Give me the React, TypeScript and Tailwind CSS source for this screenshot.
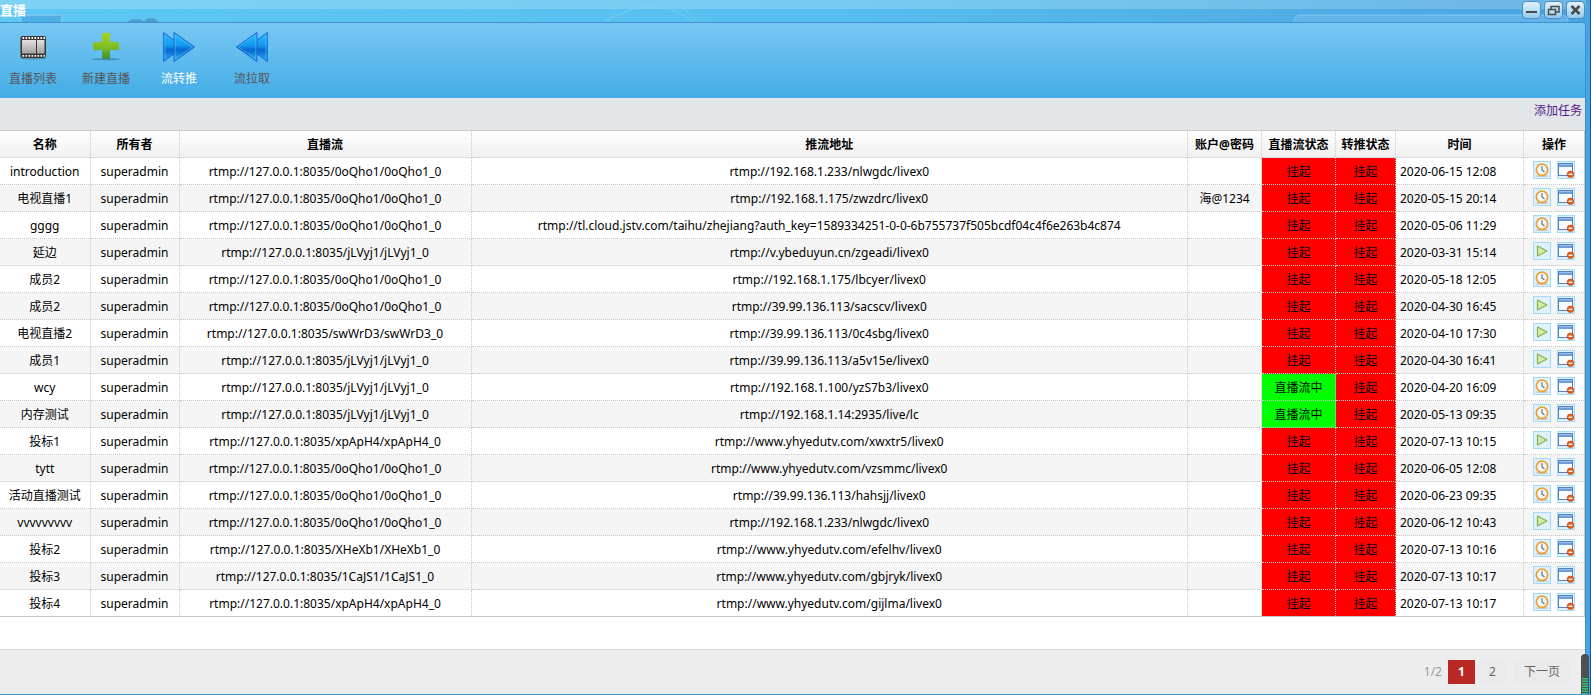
import type { ReactNode } from "react";
import clsx from "clsx";

type Task = {
  name: string;
  stream: string;
  target: string;
  account?: string;
  live?: boolean;
  time: string;
  action: "clock" | "play";
};

const TASKS: Task[] = [
  { name: "introduction", stream: "0oQho1", target: "192.168.1.233/nlwgdc/livex0", time: "2020-06-15 12:08", action: "clock" },
  { name: "电视直播1", stream: "0oQho1", target: "192.168.1.175/zwzdrc/livex0", account: "海@1234", time: "2020-05-15 20:14", action: "clock" },
  { name: "gggg", stream: "0oQho1", target: "tl.cloud.jstv.com/taihu/zhejiang?auth_key=1589334251-0-0-6b755737f505bcdf04c4f6e263b4c874", time: "2020-05-06 11:29", action: "clock" },
  { name: "延边", stream: "jLVyj1", target: "v.ybeduyun.cn/zgeadi/livex0", time: "2020-03-31 15:14", action: "play" },
  { name: "成员2", stream: "0oQho1", target: "192.168.1.175/lbcyer/livex0", time: "2020-05-18 12:05", action: "clock" },
  { name: "成员2", stream: "0oQho1", target: "39.99.136.113/sacscv/livex0", time: "2020-04-30 16:45", action: "play" },
  { name: "电视直播2", stream: "swWrD3", target: "39.99.136.113/0c4sbg/livex0", time: "2020-04-10 17:30", action: "play" },
  { name: "成员1", stream: "jLVyj1", target: "39.99.136.113/a5v15e/livex0", time: "2020-04-30 16:41", action: "play" },
  { name: "wcy", stream: "jLVyj1", target: "192.168.1.100/yzS7b3/livex0", live: true, time: "2020-04-20 16:09", action: "clock" },
  { name: "内存测试", stream: "jLVyj1", target: "192.168.1.14:2935/live/lc", live: true, time: "2020-05-13 09:35", action: "clock" },
  { name: "投标1", stream: "xpApH4", target: "www.yhyedutv.com/xwxtr5/livex0", time: "2020-07-13 10:15", action: "play" },
  { name: "tytt", stream: "0oQho1", target: "www.yhyedutv.com/vzsmmc/livex0", time: "2020-06-05 12:08", action: "clock" },
  { name: "活动直播测试", stream: "0oQho1", target: "39.99.136.113/hahsjj/livex0", time: "2020-06-23 09:35", action: "clock" },
  { name: "vvvvvvvvv", stream: "0oQho1", target: "192.168.1.233/nlwgdc/livex0", time: "2020-06-12 10:43", action: "play" },
  { name: "投标2", stream: "XHeXb1", target: "www.yhyedutv.com/efelhv/livex0", time: "2020-07-13 10:16", action: "clock" },
  { name: "投标3", stream: "1CaJS1", target: "www.yhyedutv.com/gbjryk/livex0", time: "2020-07-13 10:17", action: "clock" },
  { name: "投标4", stream: "xpApH4", target: "www.yhyedutv.com/gijlma/livex0", time: "2020-07-13 10:17", action: "clock" },
];

const COLUMNS = [
  { label: "名称", width: "w-[90px]" },
  { label: "所有者", width: "w-[89px]" },
  { label: "直播流", width: "w-[292px]" },
  { label: "推流地址", width: "" },
  { label: "账户@密码", width: "w-[74px]" },
  { label: "直播流状态", width: "w-[74px]" },
  { label: "转推状态", width: "w-[60px]" },
  { label: "时间", width: "w-[128px]" },
  { label: "操作", width: "w-[61px]" },
];

function FilmIcon() {
  return (
    <svg width="32" height="32" viewBox="0 0 32 32" aria-hidden="true">
      <defs>
        <linearGradient id="film" x1="0" y1="0" x2="0" y2="1">
          <stop offset="0" stopColor="#e2e2e2" />
          <stop offset="1" stopColor="#a2a2a2" />
        </linearGradient>
      </defs>
      <ellipse cx="16" cy="27.500" rx="13" ry="1" fill="#3d6c8a" opacity=".5" />
      <rect x="3.500" y="5" width="25.500" height="22" rx="2" fill="#3b3634" />
      <rect x="5" y="9" width="14" height="13.500" fill="url(#film)" />
      <rect x="20" y="9" width="7.500" height="13.500" fill="url(#film)" />
      <path d="M5.500 7h22.500M5.500 24.800h22.500" stroke="#fff" strokeWidth="1.800" strokeDasharray="1.600 1.400" />
    </svg>
  );
}

function PlusIcon() {
  return (
    <svg width="32" height="32" viewBox="0 0 32 32" aria-hidden="true">
      <defs>
        <linearGradient id="plus" x1="0" y1="0" x2="0" y2="1">
          <stop offset="0" stopColor="#a9d51c" />
          <stop offset=".55" stopColor="#7dbd25" />
          <stop offset="1" stopColor="#3f8f34" />
        </linearGradient>
      </defs>
      <ellipse cx="16" cy="28.200" rx="14" ry="1" fill="#2b6f9c" opacity=".6" />
      <path d="M13.500 2h5q1.500 0 1.500 1.500V11h7.500q1.500 0 1.500 1.500v5q0 1.500-1.500 1.500H20v7.500q0 1.500-1.500 1.500h-5q-1.500 0-1.500-1.500V19H4.500Q3 19 3 17.500v-5Q3 11 4.500 11H12V3.500Q12 2 13.500 2z" fill="url(#plus)" />
    </svg>
  );
}

function ArrowsIcon({ reverse }: { reverse?: boolean }) {
  return (
    <svg width="32" height="32" viewBox="0 0 32 32" aria-hidden="true">
      <defs>
        <linearGradient id="arrows" x1="0" y1="0" x2="0" y2="1">
          <stop offset="0" stopColor="#2cc0ff" />
          <stop offset=".45" stopColor="#1698ee" />
          <stop offset=".6" stopColor="#0767d0" />
          <stop offset="1" stopColor="#2fb4f8" />
        </linearGradient>
      </defs>
      <g transform={reverse ? "matrix(-1 0 0 1 32 0)" : undefined} fill="url(#arrows)" stroke="#1763d8" strokeLinejoin="round">
        <path d="M.7 1.500v29L20 16z" />
        <path d="M11 1.500v29L31.500 16z" />
        <path d="M2 4.500v23M12.200 4v24L29.500 16z" fill="none" stroke="#5fd0ff" strokeWidth=".7" opacity=".7" />
      </g>
    </svg>
  );
}

function ClockIcon() {
  return (
    <svg width="16" height="16" viewBox="0 0 16 16" aria-hidden="true">
      <ellipse cx="8" cy="14" rx="6.500" ry="1" fill="#9aa9b3" opacity=".5" />
      <circle cx="8" cy="7.800" r="5.700" fill="#f4f7fb" stroke="#eda233" strokeWidth="1.800" />
      <path d="M8 4.200V8l2.500 2" fill="none" stroke="#707b86" strokeWidth="1.300" />
    </svg>
  );
}

function PlayIcon() {
  return (
    <svg width="16" height="16" viewBox="0 0 16 16" aria-hidden="true">
      <path d="M3.500 3v10L13 8z" fill="#d4eba8" stroke="#86b054" strokeWidth="1.200" strokeLinejoin="round" />
    </svg>
  );
}

function RemoveIcon() {
  return (
    <svg width="16" height="16" viewBox="0 0 16 16" aria-hidden="true">
      <rect x=".5" y="1.500" width="14" height="12" fill="#f8fbff" stroke="#5781bd" />
      <path d="M1 2h13v3H1z" fill="#6f9bdb" />
      <path d="M1 2.500h13" stroke="#9dc0ef" />
      <circle cx="12.500" cy="12.300" r="3.300" fill="#e0601c" stroke="#bd4208" strokeWidth=".6" />
      <path d="M10.600 12.300h3.800" stroke="#fff" strokeWidth="1.300" />
    </svg>
  );
}

function ToolButton({ label, active, children }: { label: string; active?: boolean; children: ReactNode }) {
  return (
    <button
      type="button"
      className={clsx("flex w-[66px] flex-col items-center gap-2 pt-2", active ? "text-white" : "text-[#555]")}
    >
      {children}
      <span className="leading-4">{label}</span>
    </button>
  );
}

function WindowButton({ label, children }: { label: string; children: ReactNode }) {
  return (
    <button
      type="button"
      aria-label={label}
      className="flex h-[18px] w-[19px] items-center justify-center rounded-sm border border-[#4a8fbd] bg-linear-to-b from-[#e4f2fb] to-[#8fcbee]"
    >
      <svg width="13" height="14" viewBox="0 0 13 14" fill="none" stroke="#4a4a4a" strokeWidth="2" aria-hidden="true">
        {children}
      </svg>
    </button>
  );
}

function StatusCell({ live }: { live?: boolean }) {
  return <td className={live ? "bg-[#00ff00]" : "bg-[#ff0000]"}>{live ? "直播流中" : "挂起"}</td>;
}

function IconButton({ label, children }: { label: string; children: ReactNode }) {
  return (
    <button
      type="button"
      aria-label={label}
      className="flex size-[18px] items-center justify-center border border-[#a3daf8] bg-[#dff1fb]"
    >
      {children}
    </button>
  );
}

function TitleBar() {
  return (
    <header className="relative flex h-[22px] items-start justify-between bg-linear-to-r from-[#5ec8f3] via-[#57bff0] via-50% to-[#4ba4df] pr-px">
      {/* Wallpaper seen through the glass frame */}
      <svg className="absolute inset-0 size-full" aria-hidden="true">
        <rect width="100%" height="9" fill="#fff" opacity=".2" />
        <rect x="21" y="15" width="41" height="12" fill="#4eb0e4" stroke="#74c6ee" strokeWidth="2" />
        <ellipse cx="136" cy="24" rx="9" ry="5" fill="#4b9fca" />
        <ellipse cx="151" cy="23" rx="7" ry="5" fill="#4b9fca" />
        <path d="M604 22Q655-8 694 22M608 22Q618 6 627 0M672 0Q684 8 698 22" fill="none" stroke="#82d9f6" opacity=".5" />
      </svg>
      <svg className="absolute right-[17px] top-[14px] h-2 w-[276px]" aria-hidden="true">
        <rect x="1" y="1" width="274" height="20" rx="6" fill="#62b4e8" stroke="#80cbf3" />
      </svg>
      <h1 className="relative text-[13px] leading-5 font-bold text-white">直播</h1>
      <div className="relative flex gap-[3px] pt-px">
        <WindowButton label="最小化">
          <path d="M1 9h11" />
        </WindowButton>
        <WindowButton label="还原">
          <path d="M4 6V3.500h8V9H9" strokeWidth="1.500" />
          <path d="M1.500 6.500h7v5h-7z" strokeWidth="1.500" />
        </WindowButton>
        <WindowButton label="关闭">
          <path d="m2.500 3 8 8m0-8-8 8" strokeWidth="2.500" />
        </WindowButton>
      </div>
    </header>
  );
}

export default function App() {
  return (
    <div className="relative flex min-h-screen flex-col border-r border-b border-r-[#0d559f] border-b-[#3d9bd6] bg-[#48a4df] pr-1 font-['Noto_Sans','Noto_Sans_CJK_SC',sans-serif] text-xs text-black">
      <TitleBar />

      <main className="flex grow flex-col border-t border-r border-[#3a8fcf] bg-white">
        <nav className="flex h-[75px] gap-[7px] bg-linear-to-b from-[#78c8f3] to-[#41ace6]">
          <ToolButton label="直播列表">
            <FilmIcon />
          </ToolButton>
          <ToolButton label="新建直播">
            <PlusIcon />
          </ToolButton>
          <ToolButton label="流转推" active>
            <ArrowsIcon />
          </ToolButton>
          <ToolButton label="流拉取">
            <ArrowsIcon reverse />
          </ToolButton>
        </nav>

        <div className="flex h-8 items-start justify-end bg-[#e2e6e9] px-[3px] py-[5px]">
          <a href="#add" className="leading-4 text-[#551a8b]">
            添加任务
          </a>
        </div>

        <table className="w-full table-fixed border-collapse border-y border-r border-[#c8c8c8] text-center leading-4">
          <thead>
            <tr className="h-[27px] bg-linear-to-b from-white to-[#efefef]">
              {COLUMNS.map(({ label, width }) => (
                <th
                  key={label}
                  className={clsx("border-r border-b border-dotted border-[#c8c8c8] px-0 pt-0.5 pb-0 font-bold whitespace-nowrap last:border-r-0", width)}
                >
                  {label}
                </th>
              ))}
            </tr>
          </thead>
          <tbody className="[&_td]:border-r [&_td]:border-b [&_td]:border-dotted [&_td]:border-[#c8c8c8] [&_td]:px-0 [&_td]:pt-0.5 [&_td]:pb-0 [&_tr:last-child_td]:border-b-0">
            {TASKS.map((task, i) => (
              <tr key={i} className="h-[27px] even:bg-[#f5f5f5]">
                <td className="whitespace-nowrap">{task.name}</td>
                <td>superadmin</td>
                <td>{`rtmp://127.0.0.1:8035/${task.stream}/${task.stream}_0`}</td>
                <td>{`rtmp://${task.target}`}</td>
                <td>{task.account}</td>
                <StatusCell live={task.live} />
                <StatusCell />
                <td className="text-left">
                  <span className="pl-1">{task.time}</span>
                </td>
                <td>
                  <div className="flex justify-center gap-1.5 pb-1">
                    <IconButton label={task.action === "clock" ? "定时" : "开始"}>
                      {task.action === "clock" ? <ClockIcon /> : <PlayIcon />}
                    </IconButton>
                    <IconButton label="删除">
                      <RemoveIcon />
                    </IconButton>
                  </div>
                </td>
              </tr>
            ))}
          </tbody>
        </table>

        <footer className="mt-auto flex h-[45px] items-center justify-end border-t border-dotted border-[#c8c8c8] bg-[#ededed] pr-[15px] text-[#666]">
          <span className="mr-1.5 text-[#999]">1/2</span>
          <button type="button" className="mr-1 h-6 w-[27px] bg-[#b92825] font-bold text-white">
            1
          </button>
          <button type="button" className="mr-2 h-6 w-[27px] bg-[#eaeaea]">
            2
          </button>
          <button type="button" className="h-6 w-14 bg-[#eaeaea]">
            下一页
          </button>
        </footer>
      </main>

      {/* Level meter over the window corner */}
      <svg className="absolute right-px bottom-0 h-10 w-2" aria-hidden="true">
        <rect width="8" height="46" rx="4" fill="#4b5056" />
        <path d="M4 24v16" stroke="#35c46c" strokeWidth="6" strokeDasharray="1.500 1" />
      </svg>
    </div>
  );
}
